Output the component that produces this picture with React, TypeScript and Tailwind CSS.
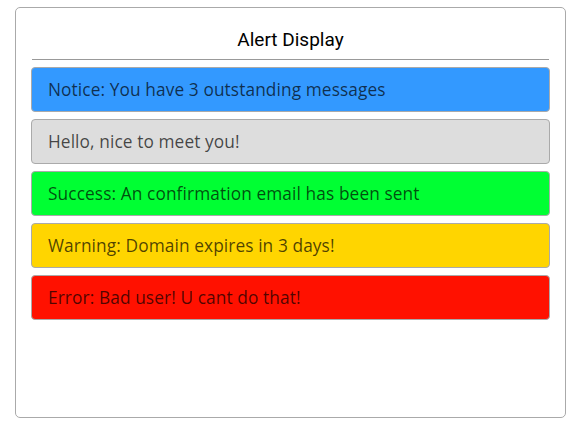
import React from "react";

const alerts = [
  { text: "Notice: You have 3 outstanding messages", bg: "bg-[#3399ff]" },
  { text: "Hello, nice to meet you!", bg: "bg-[#dddddd]" },
  { text: "Success: An confirmation email has been sent", bg: "bg-[#00ff33]" },
  { text: "Warning: Domain expires in 3 days!", bg: "bg-[#ffd500]" },
  { text: "Error: Bad user! U cant do that!", bg: "bg-[#ff1100]" },
];

export default function App() {
  return (
    <div className="w-[580px] h-[426px] bg-white pt-[7px] pl-[15px]">
      <div className="w-[551px] h-[411px] border border-[#aaaaaa] rounded-[5px] px-[15px] pt-[20px] flex flex-col">
        <div
          className="text-center text-[19px] leading-[24px] text-black"
          style={{ fontFamily: "Roboto, sans-serif" }}
        >
          Alert Display
        </div>
        <div className="mt-[7px] mx-[1px] border-t border-[#999999]" />
        <div className="mt-[7px] flex flex-col gap-[7px]">
          {alerts.map((a) => (
            <div
              key={a.text}
              className={`${a.bg} h-[45px] border border-[#aaaaaa] rounded-[4px] pl-[16px] flex items-center text-[17.3px] tracking-[0.1px] text-black/70`}
              style={{ fontFamily: "'Open Sans', sans-serif" }}
            >
              {a.text}
            </div>
          ))}
        </div>
      </div>
    </div>
  );
}
